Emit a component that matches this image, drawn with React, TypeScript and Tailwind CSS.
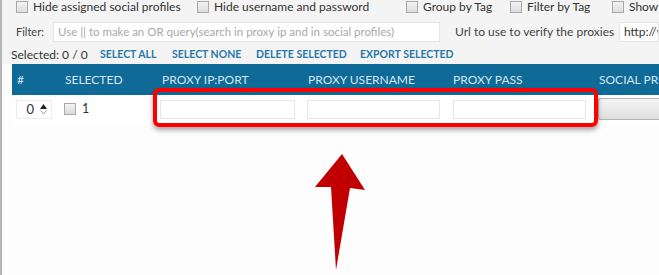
import React from "react";

const font = { fontFamily: "Lato, 'Noto Sans', sans-serif" };

function Check({ label, className = "" }: { label: string; className?: string }) {
  return (
    <div className={`flex items-center gap-[5px] shrink-0 ${className}`}>
      <div className="w-[12px] h-[12px] border border-[#a9a9a9] bg-gradient-to-b from-[#f4f4f4] to-[#dcdcdc] shrink-0" />
      <span className="text-[12px] text-[#333] whitespace-nowrap">{label}</span>
    </div>
  );
}

function Cell({ children, className = "" }: { children?: React.ReactNode; className?: string }) {
  return <div className={`flex items-center ${className}`}>{children}</div>;
}

export default function App() {
  return (
    <div className="w-[659px] h-[275px] relative overflow-hidden bg-[#fdfdfd] border-l-2 border-[#b5b5b5]" style={font}>
      <div className="bg-[#f4f4f4]">
        {/* checkbox row */}
        <div className="h-[13px] flex items-center overflow-hidden">
          <Check label="Hide assigned social profiles" className="ml-[14px] w-[181px]" />
          <Check label="Hide username and password" className="w-[209px]" />
          <Check label="Group by Tag" className="w-[104px]" />
          <Check label="Filter by Tag" className="w-[102px]" />
          <Check label="Show deleted" />
        </div>
        {/* filter row */}
        <div className="h-[20px] mt-[9px] flex items-center">
          <span className="ml-[14px] w-[37px] text-[11px] text-[#444]">Filter:</span>
          <div className="w-[387px] h-[20px] bg-white border border-[#e6e6e6] flex items-center pl-[4px] text-[11.5px] text-[#a8a8a8] whitespace-nowrap overflow-hidden">
            Use || to make an OR query(search in proxy ip and in social profiles)
          </div>
          <span className="ml-[15px] w-[164px] text-[12px] text-[#444] whitespace-nowrap">Url to use to verify the proxies</span>
          <div className="flex-1 h-[20px] bg-white border border-[#e6e6e6] flex items-center pl-[4px] text-[12px] text-[#333] whitespace-nowrap overflow-hidden">
            http://www.google.com
          </div>
        </div>
        {/* actions row */}
        <div className="h-[14px] mt-[6px] flex items-center text-[11px] whitespace-nowrap">
          <span className="ml-[9px] w-[89px] text-[#333] text-[12px]">Selected: 0 / 0</span>
          <span className="w-[72px] font-bold text-[#2a78a8] text-[10.5px]">SELECT ALL</span>
          <span className="w-[84px] font-bold text-[#2a78a8] text-[10.5px]">SELECT NONE</span>
          <span className="w-[104px] font-bold text-[#2a78a8] text-[10.5px]">DELETE SELECTED</span>
          <span className="font-bold text-[#2a78a8] text-[10.5px]">EXPORT SELECTED</span>
        </div>
        <div className="h-[2px]" />
      </div>
      {/* table */}
      <div className="ml-[10px]">
        <div className="h-[31px] bg-[#0f6a98] grid grid-cols-[48px_97px_146px_145px_146px_1fr] text-[12px] text-[#d6e6ef] whitespace-nowrap">
          <Cell className="pl-[5px]">#</Cell>
          <Cell className="pl-[5px]">SELECTED</Cell>
          <Cell className="pl-[5px]">PROXY IP:PORT</Cell>
          <Cell className="pl-[5px]">PROXY USERNAME</Cell>
          <Cell className="pl-[5px]">PROXY PASS</Cell>
          <Cell className="pl-[5px]">SOCIAL PROFILES</Cell>
        </div>
        <div className="h-[28px] bg-white grid grid-cols-[48px_97px_146px_145px_146px_1fr]">
          <Cell className="pl-[4px]">
            <div className="w-[36px] h-[19px] border border-[#ececec] bg-white flex items-center justify-end pr-[4px] gap-[6px]">
              <span className="text-[13px] text-[#333] leading-none">0</span>
              <div className="flex flex-col items-center gap-[1px]">
                <svg width="7" height="5" viewBox="0 0 7 5"><path d="M0 5 L3.5 0 L7 5 Z" fill="#222" /></svg>
                <svg width="7" height="5" viewBox="0 0 7 5"><path d="M0.5 0.5 L3.5 4 L6.5 0.5" fill="none" stroke="#999" strokeWidth="1" /></svg>
              </div>
            </div>
          </Cell>
          <Cell className="pl-[4px] gap-[6px]">
            <div className="w-[12px] h-[12px] border border-[#a9a9a9] bg-gradient-to-b from-[#f4f4f4] to-[#dadada]" />
            <span className="text-[12.5px] text-[#333]">1</span>
          </Cell>
          <Cell className="pl-[3px]">
            <div className="w-[135px] h-[19px] bg-white border border-[#e6e6e6]" />
          </Cell>
          <Cell className="pl-[4px]">
            <div className="w-[133px] h-[19px] bg-white border border-[#e6e6e6]" />
          </Cell>
          <Cell className="pl-[5px]">
            <div className="w-[133px] h-[19px] bg-white border border-[#e6e6e6]" />
          </Cell>
          <Cell className="pl-[4px]">
            <div className="w-full h-[22px] rounded-l-[3px] border border-[#b3b3b3] border-r-0 bg-gradient-to-b from-[#f5f5f5] to-[#dedede]" />
          </Cell>
        </div>
      </div>
      {/* annotation: red highlight box */}
      <div className="absolute left-[151px] top-[88px] w-[445px] h-[39px] border-[4px] border-[#ff0000] rounded-[6px] shadow-[0_3px_5px_rgba(0,0,0,0.35)]" />
      {/* annotation: arrow */}
      <svg className="absolute left-0 top-0" width="659" height="275" viewBox="0 0 659 275">
        <path d="M340 154 L363 190 L348 188 L334 270 L329 187 L313 187 Z" fill="#c00000" />
      </svg>
    </div>
  );
}
